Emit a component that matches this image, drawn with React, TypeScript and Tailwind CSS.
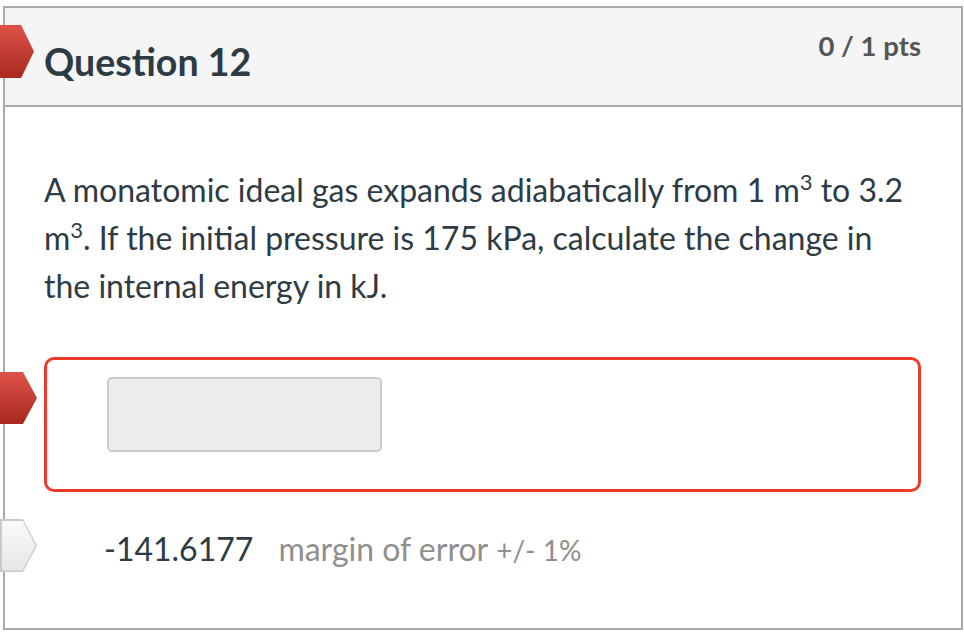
const FLAG_RED =
  "bg-gradient-to-b from-[#dd5148] to-[#a9291f] [clip-path:polygon(0_0,62%_0,100%_50%,62%_100%,0_100%)]";

function Flag({ className }: { className: string }) {
  return <div className={`absolute left-0 ${className}`} />;
}

export default function App() {
  return (
    <div className="relative h-[634px] w-[964px] bg-white pt-[6px] pl-[3px] font-['Lato','Noto_Sans',sans-serif] text-[#2d3b45]">
      <div className="flex h-[624px] w-[960px] flex-col border-2 border-[#a9a9a9]">
        <header className="flex h-[99px] shrink-0 items-start justify-between border-b-2 border-[#a9a9a9] bg-[#f5f5f5] pr-[40px] pl-[39px]">
          <h2 className="mt-[32px] text-[37.5px] leading-[44px] font-bold">Question 12</h2>
          <span className="mt-[22px] text-[27.5px] leading-[32px] font-bold text-[#555]">0 / 1 pts</span>
        </header>

        <div className="flex flex-col pr-[40px] pl-[39px]">
          <p className="mt-[59px] text-[32px] leading-[48px]">
            A monatomic ideal gas expands adiabatically from 1 m<sup className="-top-[12px] text-[22px]">3</sup> to 3.2 m
            <sup className="-top-[12px] text-[22px]">3</sup>. If the initial pressure is 175 kPa, calculate the change in the internal energy in kJ.
          </p>

          <div className="mt-[47px] flex h-[135px] w-[877px] flex-col rounded-[10px] border-[3px] border-[#ee3a2b] pt-[17px] pl-[60px]">
            <div className="h-[75px] w-[275px] rounded-[5px] border-2 border-[#cccccc] bg-[#ededed]" />
          </div>

          <div className="mt-[38px] flex items-baseline pl-[60px] leading-[38px]">
            <span className="text-[32px]">-141.6177</span>
            <span className="ml-[25px] text-[32px] text-[#8f8f8f]">margin of error</span>
            <span className="ml-[8px] text-[28px] text-[#8f8f8f]">+/- 1%</span>
          </div>
        </div>
      </div>

      <Flag className={`top-[25px] h-[53px] w-[34px] ${FLAG_RED}`} />
      <Flag className={`top-[372px] h-[52px] w-[37px] ${FLAG_RED}`} />
      <div className="absolute top-[519px] left-0 h-[53px] w-[37px] bg-[#c9c9c9] [clip-path:polygon(0_0,62%_0,100%_50%,62%_100%,0_100%)]">
        <div className="absolute inset-[1.5px] bg-gradient-to-b from-[#fafafa] to-[#e6e6e6] [clip-path:polygon(0_0,62%_0,100%_50%,62%_100%,0_100%)]" />
      </div>
    </div>
  );
}
